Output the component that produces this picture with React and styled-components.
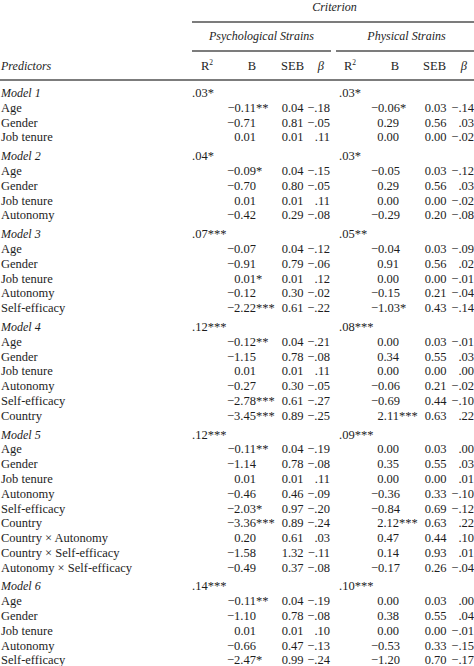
import React from "react";
import styled, { createGlobalStyle } from "styled-components";

const Global = createGlobalStyle`
  html, body { margin: 0; padding: 0; background: #ffffff; overflow: hidden; }
  #root { width: 474px; overflow: hidden; }
`;

const LINE = "2px solid #7c7c7c";
const ITALIC_SIZE = "12px";

const Table = styled.table`
  border-collapse: collapse;
  table-layout: fixed;
  width: 477px;
  font-family: "Liberation Serif", "Times New Roman", serif;
  font-size: 12.5px;
  color: #1d1d1d;
`;

const Col = styled.col`
  width: ${(p) => p.$w}px;
`;

const CriterionCell = styled.th`
  font-weight: normal;
  font-style: italic;
  font-size: ${ITALIC_SIZE};
  text-align: center;
  line-height: 14.8px;
  padding: 0 0 6px 0;
  border-bottom: ${(p) => (p.$rule ? LINE : "none")};
`;

const GroupCell = styled.th`
  font-weight: normal;
  padding: 0;
`;

const GroupLine = styled.div`
  font-style: italic;
  font-size: ${ITALIC_SIZE};
  text-align: center;
  line-height: 14.8px;
  padding: 6px 0 6px;
  border-bottom: ${LINE};
  margin-left: ${(p) => p.$ml || 0}px;
  margin-right: ${(p) => p.$mr || 0}px;
`;

const HeadCell = styled.th`
  font-weight: normal;
  font-style: ${(p) => (p.$italic ? "italic" : "normal")};
  font-size: ${(p) => (p.$small ? ITALIC_SIZE : "12.5px")};
  text-align: ${(p) => p.$align || "right"};
  line-height: 14.8px;
  padding: 7px ${(p) => p.$pr || 0}px 6px ${(p) => p.$pl || 0}px;
  border-bottom: ${LINE};
  white-space: nowrap;
`;

const Sup = styled.sup`
  font-size: 7.5px;
  vertical-align: 5px;
  line-height: 0;
`;

const Row = styled.tr``;

const LabelCell = styled.td`
  text-align: left;
  white-space: nowrap;
  line-height: 14.8px;
  padding: ${(p) => p.$top}px 0 0 1px;
  font-style: ${(p) => (p.$italic ? "italic" : "normal")};
  font-size: ${(p) => (p.$italic ? ITALIC_SIZE : "12.5px")};
`;

const R2Cell = styled.td`
  text-align: left;
  white-space: nowrap;
  line-height: 14.8px;
  padding: ${(p) => p.$top}px 0 0 ${(p) => p.$pl || 0}px;
`;

const NumCell = styled.td`
  text-align: right;
  white-space: nowrap;
  line-height: 14.8px;
  padding: ${(p) => p.$top}px ${(p) => p.$pr}px 0 0;
`;

const Stars = styled.span`
  display: inline-block;
  width: 0;
  white-space: nowrap;
  text-align: left;
`;

const M = "\u2212";

const models = [
  {
    name: "Model 1",
    r2: [".03*", ".03*"],
    rows: [
      ["Age", `${M}0.11**`, "0.04", `${M}.18`, `${M}0.06*`, "0.03", `${M}.14`],
      ["Gender", `${M}0.71`, "0.81", `${M}.05`, "0.29", "0.56", ".03"],
      ["Job tenure", "0.01", "0.01", ".11", "0.00", "0.00", `${M}.02`],
    ],
  },
  {
    name: "Model 2",
    r2: [".04*", ".03*"],
    rows: [
      ["Age", `${M}0.09*`, "0.04", `${M}.15`, `${M}0.05`, "0.03", `${M}.12`],
      ["Gender", `${M}0.70`, "0.80", `${M}.05`, "0.29", "0.56", ".03"],
      ["Job tenure", "0.01", "0.01", ".11", "0.00", "0.00", `${M}.02`],
      ["Autonomy", `${M}0.42`, "0.29", `${M}.08`, `${M}0.29`, "0.20", `${M}.08`],
    ],
  },
  {
    name: "Model 3",
    r2: [".07***", ".05**"],
    rows: [
      ["Age", `${M}0.07`, "0.04", `${M}.12`, `${M}0.04`, "0.03", `${M}.09`],
      ["Gender", `${M}0.91`, "0.79", `${M}.06`, "0.91", "0.56", ".02"],
      ["Job tenure", "0.01*", "0.01", ".12", "0.00", "0.00", `${M}.01`],
      ["Autonomy", `${M}0.12`, "0.30", `${M}.02`, `${M}0.15`, "0.21", `${M}.04`],
      ["Self-efficacy", `${M}2.22***`, "0.61", `${M}.22`, `${M}1.03*`, "0.43", `${M}.14`],
    ],
  },
  {
    name: "Model 4",
    r2: [".12***", ".08***"],
    rows: [
      ["Age", `${M}0.12**`, "0.04", `${M}.21`, "0.00", "0.03", `${M}.01`],
      ["Gender", `${M}1.15`, "0.78", `${M}.08`, "0.34", "0.55", ".03"],
      ["Job tenure", "0.01", "0.01", ".11", "0.00", "0.00", ".00"],
      ["Autonomy", `${M}0.27`, "0.30", `${M}.05`, `${M}0.06`, "0.21", `${M}.02`],
      ["Self-efficacy", `${M}2.78***`, "0.61", `${M}.27`, `${M}0.69`, "0.44", `${M}.10`],
      ["Country", `${M}3.45***`, "0.89", `${M}.25`, "2.11***", "0.63", ".22"],
    ],
  },
  {
    name: "Model 5",
    r2: [".12***", ".09***"],
    rows: [
      ["Age", `${M}0.11**`, "0.04", `${M}.19`, "0.00", "0.03", ".00"],
      ["Gender", `${M}1.14`, "0.78", `${M}.08`, "0.35", "0.55", ".03"],
      ["Job tenure", "0.01", "0.01", ".11", "0.00", "0.00", ".01"],
      ["Autonomy", `${M}0.46`, "0.46", `${M}.09`, `${M}0.36`, "0.33", `${M}.10`],
      ["Self-efficacy", `${M}2.03*`, "0.97", `${M}.20`, `${M}0.84`, "0.69", `${M}.12`],
      ["Country", `${M}3.36***`, "0.89", `${M}.24`, "2.12***", "0.63", ".22"],
      ["Country \u00d7 Autonomy", "0.20", "0.61", ".03", "0.47", "0.44", ".10"],
      ["Country \u00d7 Self-efficacy", `${M}1.58`, "1.32", `${M}.11`, "0.14", "0.93", ".01"],
      ["Autonomy \u00d7 Self-efficacy", `${M}0.49`, "0.37", `${M}.08`, `${M}0.17`, "0.26", `${M}.04`],
    ],
  },
  {
    name: "Model 6",
    r2: [".14***", ".10***"],
    rows: [
      ["Age", `${M}0.11**`, "0.04", `${M}.19`, "0.00", "0.03", ".00"],
      ["Gender", `${M}1.10`, "0.78", `${M}.08`, "0.38", "0.55", ".04"],
      ["Job tenure", "0.01", "0.01", ".10", "0.00", "0.00", `${M}.01`],
      ["Autonomy", `${M}0.66`, "0.47", `${M}.13`, `${M}0.53`, "0.33", `${M}.15`],
      ["Self-efficacy", `${M}2.47*`, "0.99", `${M}.24`, `${M}1.20`, "0.70", `${M}.17`],
    ],
  },
];

function Num({ value }) {
  const m = value.match(/^(.*?)(\**)$/);
  return (
    <>
      {m[1]}
      {m[2] ? <Stars>{m[2]}</Stars> : null}
    </>
  );
}

const PAD = [6, 2.5, 4, 6, 2.5, 3];

function ModelBlock({ model, first }) {
  const top = first ? 4.6 : 4;
  return (
    <>
      <Row>
        <LabelCell $top={top} $italic>{model.name}</LabelCell>
        <R2Cell $top={top}>{model.r2[0]}</R2Cell>
        <NumCell $top={top} $pr={PAD[0]} />
        <NumCell $top={top} $pr={PAD[1]} />
        <NumCell $top={top} $pr={PAD[2]} />
        <R2Cell $top={top} $pl={5}>{model.r2[1]}</R2Cell>
        <NumCell $top={top} $pr={PAD[3]} />
        <NumCell $top={top} $pr={PAD[4]} />
        <NumCell $top={top} $pr={PAD[5]} />
      </Row>
      {model.rows.map((r, i) => (
        <Row key={i}>
          <LabelCell $top={0}>{r[0]}</LabelCell>
          <R2Cell $top={0} />
          <NumCell $top={0} $pr={PAD[0]}><Num value={r[1]} /></NumCell>
          <NumCell $top={0} $pr={PAD[1]}><Num value={r[2]} /></NumCell>
          <NumCell $top={0} $pr={PAD[2]}><Num value={r[3]} /></NumCell>
          <R2Cell $top={0} $pl={5} />
          <NumCell $top={0} $pr={PAD[3]}><Num value={r[4]} /></NumCell>
          <NumCell $top={0} $pr={PAD[4]}><Num value={r[5]} /></NumCell>
          <NumCell $top={0} $pr={PAD[5]}><Num value={r[6]} /></NumCell>
        </Row>
      ))}
    </>
  );
}

export default function App() {
  return (
    <>
      <Global />
      <Table>
        <colgroup>
          <Col $w={192} />
          <Col $w={30} />
          <Col $w={40} />
          <Col $w={44} />
          <Col $w={28} />
          <Col $w={37} />
          <Col $w={34} />
          <Col $w={44} />
          <Col $w={28} />
        </colgroup>
        <thead>
          <Row>
            <CriterionCell />
            <CriterionCell colSpan={8} $rule>Criterion</CriterionCell>
          </Row>
          <Row>
            <GroupCell />
            <GroupCell colSpan={4}>
              <GroupLine $mr={3}>Psychological Strains</GroupLine>
            </GroupCell>
            <GroupCell colSpan={4}>
              <GroupLine $ml={2}>Physical Strains</GroupLine>
            </GroupCell>
          </Row>
          <Row>
            <HeadCell $align="left" $pl={1} $italic $small>Predictors</HeadCell>
            <HeadCell $align="center">R<Sup>2</Sup></HeadCell>
            <HeadCell $pr={6}>B</HeadCell>
            <HeadCell $pr={2}>SEB</HeadCell>
            <HeadCell $pr={10} $italic>β</HeadCell>
            <HeadCell $align="left" $pl={10}>R<Sup>2</Sup></HeadCell>
            <HeadCell $pr={6}>B</HeadCell>
            <HeadCell $pr={3}>SEB</HeadCell>
            <HeadCell $pr={10} $italic>β</HeadCell>
          </Row>
        </thead>
        <tbody>
          {models.map((m, i) => (
            <ModelBlock key={m.name} model={m} first={i === 0} />
          ))}
        </tbody>
      </Table>
    </>
  );
}
